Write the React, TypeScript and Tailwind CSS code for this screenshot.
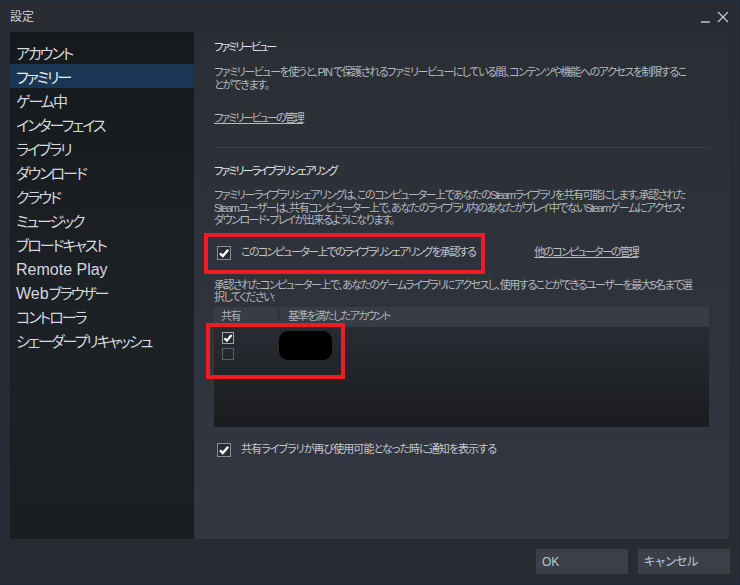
import React from 'react';

const MENU = [
  'アカウント',
  'ファミリー',
  'ゲーム中',
  'インターフェイス',
  'ライブラリ',
  'ダウンロード',
  'クラウド',
  'ミュージック',
  'ブロードキャスト',
  'Remote Play',
  'Webブラウザー',
  'コントローラ',
  'シェーダープリキャッシュ',
];

function MenuLabel({ text }: { text: string }) {
  const parts = text.split(/([A-Za-z ]+)/).filter(Boolean);
  return (
    <>
      {parts.map((p, i) =>
        /[A-Za-z]/.test(p) ? (
          <span key={i} className="text-[16px] tracking-normal">
            {p}
          </span>
        ) : (
          <span key={i}>{p}</span>
        )
      )}
    </>
  );
}

function BigCheck() {
  return (
    <span className="flex h-[14px] w-[14px] items-center justify-center border border-[#8a8d92] bg-[#2a2d33]">
      <svg width="12" height="12" viewBox="0 0 12 12">
        <path d="M2 6.3 L4.8 9 L10.2 2.8" stroke="#ffffff" strokeWidth="2.4" fill="none" />
      </svg>
    </span>
  );
}

function SmallCheck({ checked }: { checked: boolean }) {
  return (
    <span
      className={`flex h-[12px] w-[12px] items-center justify-center border ${
        checked ? 'border-[#a2a5a9]' : 'border-[#5c5f64]'
      }`}
    >
      {checked && (
        <svg width="10" height="10" viewBox="0 0 10 10">
          <path d="M1.5 5.2 L3.9 7.6 L8.6 2" stroke="#ffffff" strokeWidth="2.2" fill="none" />
        </svg>
      )}
    </span>
  );
}

export default function App() {
  return (
    <div className="flex h-[585px] w-[740px] flex-col border border-[#1b2a3c] bg-[#282b31] font-['Liberation_Sans','Noto_Sans_CJK_JP',sans-serif] [font-feature-settings:'palt']">
      {/* title bar */}
      <div className="flex h-[31px] items-center justify-between pl-[9px] pr-[10px]">
        <span className="text-[12px] text-[#c9cdd1]">設定</span>
        <div className="flex items-center gap-[6px]">
          <svg width="10" height="12" viewBox="0 0 10 12">
            <path d="M0 11 H9" stroke="#b9bdc2" strokeWidth="1.6" />
          </svg>
          <svg width="12" height="12" viewBox="0 0 12 12">
            <path d="M1 1 L11 11 M11 1 L1 11" stroke="#c3c7cb" strokeWidth="1.3" />
          </svg>
        </div>
      </div>

      {/* body */}
      <div className="flex h-[507px] pl-[9px] pr-[10px]">
        <nav className="w-[184px] shrink-0 bg-gradient-to-b from-[#15181c] via-[#1d2025] to-[#1b1e21] pt-[8px]">
          {MENU.map((m) => (
            <div
              key={m}
              className={`flex h-[24px] items-center whitespace-nowrap pl-[6px] pt-[4px] text-[15px] tracking-[-2px] ${
                m === 'ファミリー' ? 'bg-[#1a3655] text-[#e8ecef]' : 'text-[#d3d9de]'
              }`}
            >
              <MenuLabel text={m} />
            </div>
          ))}
        </nav>

        <section className="relative flex min-w-0 flex-1 flex-col overflow-hidden bg-gradient-to-b from-[#2b2e34] to-[#333742] px-[20px] text-[11px] tracking-[-1.45px]">
          <div className="mt-[7px] leading-[16px] tracking-[-2px] text-[#e2e4e6]">ファミリービュー</div>
          <p className="mt-[11px] whitespace-nowrap leading-[12.5px] text-[#b4b8bc]">
            ファミリービューを使うと、PIN で保護されるファミリービューにしている間、コンテンツや機能へのアクセスを制限するこ
            <br />
            とができます。
          </p>
          <a className="mt-[19px] self-start leading-[16px] tracking-[-1.9px] text-[#b9bcbf] underline">ファミリービューの管理</a>

          <div className="mt-[21px] h-px bg-[#3c3f47]" />

          <div className="mt-[15px] leading-[16px] tracking-[-1.9px] text-[#e2e4e6]">ファミリーライブラリシェアリング</div>
          <p className="mt-[10px] whitespace-nowrap leading-[12.5px] text-[#b4b8bc]">
            ファミリーライブラリシェアリングは、このコンピューター上であなたのSteamライブラリを共有可能にします。承認された
            <br />
            Steamユーザーは、共有コンピューター上で、あなたのライブラリ内のあなたがプレイ中でないSteamゲームにアクセス・
            <br />
            ダウンロード・プレイが出来るようになります。
          </p>

          <div className="mt-[18px] flex h-[16px] items-center">
            <span className="ml-[3px]">
              <BigCheck />
            </span>
            <span className="ml-[10px] whitespace-nowrap tracking-[-1.65px] text-[#c4c7ca]">
              このコンピューター上でのライブラリシェアリングを承認する
            </span>
            <a className="ml-auto mr-[71px] whitespace-nowrap tracking-[-1.8px] text-[#b9bcbf] underline">他のコンピューターの管理</a>
          </div>

          <p className="mt-[18px] whitespace-nowrap leading-[12.5px] tracking-[-1.5px] text-[#b4b8bc]">
            承認されたコンピューター上で、あなたのゲームライブラリにアクセスし、使用することができるユーザーを最大5名まで選
            <br />
            択してください:
          </p>

          <div className="mt-[3px] flex flex-col">
            <div className="flex h-[20px] items-center bg-[#383c45] text-[#aeb2b6]">
              <span className="w-[64px] pl-[7px]">共有</span>
              <span className="h-full w-px bg-[#2a2d33]" />
              <span className="pl-[9px] tracking-[-1.7px]">基準を満たしたアカウント</span>
            </div>
            <div className="flex h-[100px] bg-gradient-to-b from-[#282b31] to-[#1a1c1f]">
              <div className="flex w-[65px] flex-col gap-[4px] pl-[8px] pt-[5px]">
                <SmallCheck checked />
                <SmallCheck checked={false} />
              </div>
              <div className="pt-[4px]">
                <div className="h-[29px] w-[53px] rounded-[9px] bg-black" />
              </div>
            </div>
          </div>

          <div className="mt-[15px] flex h-[16px] items-center">
            <span className="ml-[3px]">
              <BigCheck />
            </span>
            <span className="ml-[10px] whitespace-nowrap tracking-[-0.95px] text-[#c4c7ca]">
              共有ライブラリが再び使用可能となった時に通知を表示する
            </span>
          </div>

          {/* red annotation boxes */}
          <div className="absolute left-[10px] top-[201px] h-[41px] w-[281px] border-4 border-[#ed1c24]" />
          <div className="absolute left-[12px] top-[291px] h-[56px] w-[139px] border-4 border-[#ed1c24]" />
        </section>
      </div>

      {/* footer */}
      <div className="flex flex-1 justify-end gap-[10px] pr-[9px] pt-[10px]">
        <button className="flex h-[25px] w-[92px] items-center bg-[#3b3f48] pl-[6px] text-[12px] text-[#b9c6da]">OK</button>
        <button className="flex h-[25px] w-[92px] items-center bg-[#3b3f48] pl-[6px] text-[12px] text-[#b9c6da]">キャンセル</button>
      </div>
    </div>
  );
}
